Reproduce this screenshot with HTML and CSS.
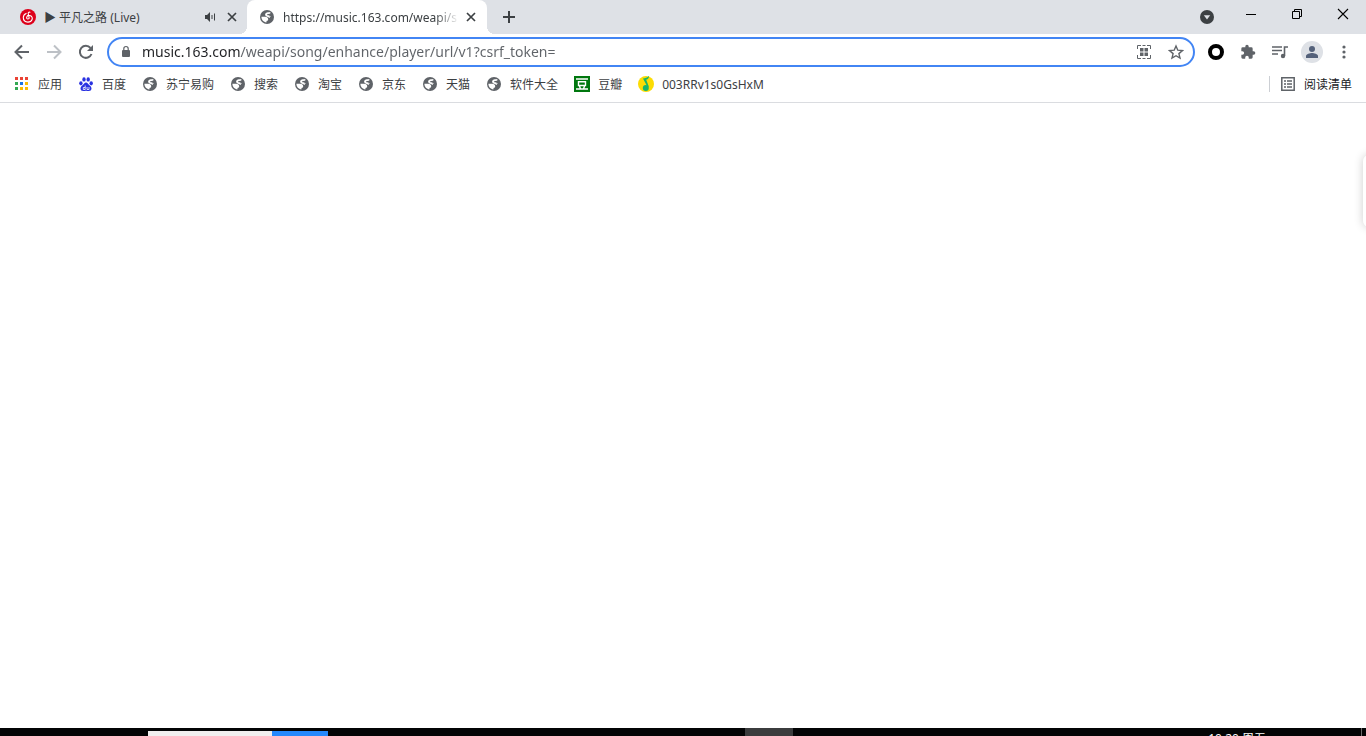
FILE: index.html
```html
<!DOCTYPE html>
<html lang="zh-CN">
<head>
  <meta charset="UTF-8">
  <meta name="viewport" content="width=device-width, initial-scale=1.0">
  <title>music.163.com</title>
  <link rel="stylesheet" href="styles.css">
</head>
<body>
  <svg class="sprite" aria-hidden="true">
    <symbol id="globe" viewBox="0 0 16 16">
      <circle cx="8" cy="8" r="7" fill="#5f6368"/>
      <path d="M11 3.300C10.500 4.300 9 4 8 4.300 6.500 4.800 6.800 6.600 8.200 6.900c1.600.3 2.300 1 3.600 1.200" fill="none" stroke="#fff" stroke-width="1.900"/>
      <path d="M2.400 7.800h3.800c1.900 0 3 1 3 2.600 0 .9-.7 1-1.300 1.400-.5.400-.5 1-.5 1.700-2.800-.3-5-2.600-5-5.700z" fill="#fff"/>
      <path d="M10.500 7.500h3c.1 2.200-1.100 4.200-2.800 5.200.3-1 1-2.600-.2-5.200z" fill="#5f6368"/>
    </symbol>
    <symbol id="close" viewBox="0 0 12 12">
      <path d="M2 2l8 8M10 2l-8 8" stroke="#3c4043" stroke-width="1.700" fill="none"/>
    </symbol>
  </svg>

  <header class="browser">
    <div class="tab-strip">
      <div class="tab">
        <svg class="icon" viewBox="0 0 16 16">
          <circle cx="8" cy="8" r="8" fill="#dd001b"/>
          <path d="M9.900 3.300C8.800 2.900 8 3.500 8.200 4.500l.9 4c.2 1.100-.5 1.500-1.200 1.500-1 0-1.400-.8-1.200-1.700.3-1.400 1.700-2.100 3.100-1.800 2 .4 2.900 2.300 2.300 4-.6 1.600-2.200 2.600-4.200 2.600-2.700 0-4.600-1.900-4.600-4.500 0-2 1.100-3.500 2.800-4.200" fill="none" stroke="#fff" stroke-width="1.100" stroke-linecap="round"/>
        </svg>
        <a class="tab-title" href="#">▶ 平凡之路 (Live)</a>
        <button class="tab-button audio" aria-label="静音">
          <svg viewBox="0 0 12 12">
            <path d="M1 4h2l3-3v10L3 8H1z" fill="#3c4043"/>
            <path d="M8 4v4M10.500 2.500v7" stroke="#3c4043" fill="none"/>
          </svg>
        </button>
        <button class="tab-button" aria-label="关闭"><svg><use href="#close"/></svg></button>
      </div>
      <div class="tab active">
        <svg class="icon"><use href="#globe"/></svg>
        <a class="tab-title fade" href="#">https://music.163.com/weapi/s</a>
        <button class="tab-button" aria-label="关闭"><svg><use href="#close"/></svg></button>
      </div>
      <button class="new-tab" aria-label="新标签页">
        <svg viewBox="0 0 12 12"><path d="M6 0v12M0 6h12" stroke="#3c4043" stroke-width="2"/></svg>
      </button>
      <div class="window-controls">
        <button class="tab-search" aria-label="搜索标签页">
          <svg viewBox="0 0 14 14"><circle cx="7" cy="7" r="7" fill="#3c4043"/><path d="M3.800 5.200h6.400L7 9.600z" fill="#dee1e6"/></svg>
        </button>
        <button aria-label="最小化"><svg viewBox="0 0 12 12"><path d="M1 6.500h10" stroke="#000"/></svg></button>
        <button aria-label="还原"><svg viewBox="0 0 12 12"><path d="M1.500 3.500h7v7h-7zM3.500 3.500v-2h7v7h-2" fill="none" stroke="#000"/></svg></button>
        <button aria-label="关闭窗口"><svg viewBox="0 0 12 12"><path d="M1 1l10 10M11 1L1 11" stroke="#000" stroke-width="1.100"/></svg></button>
      </div>
    </div>

    <div class="toolbar">
      <button class="tool" aria-label="后退">
        <svg viewBox="0 0 16 16"><path d="M15 8H2.500M8 1.500L1.500 8 8 14.500" fill="none" stroke="#5f6368" stroke-width="2"/></svg>
      </button>
      <button class="tool" aria-label="前进" disabled>
        <svg viewBox="0 0 16 16"><path d="M1 8h12.500M8 1.500L14.500 8 8 14.500" fill="none" stroke="#bdc1c6" stroke-width="2"/></svg>
      </button>
      <button class="tool" aria-label="重新加载">
        <svg viewBox="0 0 16 16"><path d="M13.500 10A6 6 0 1 1 12.500 4" fill="none" stroke="#5f6368" stroke-width="2"/><path d="M15 1v6H9z" fill="#5f6368"/></svg>
      </button>
      <form class="address">
        <svg class="icon" viewBox="0 0 16 16">
          <path d="M5 6h6a1 1 0 0 1 1 1v5a1 1 0 0 1-1 1H5a1 1 0 0 1-1-1V7a1 1 0 0 1 1-1z" fill="#5f6368"/>
          <path d="M5.800 6.500V4.700a2.200 2.200 0 0 1 4.400 0v1.800" fill="none" stroke="#5f6368" stroke-width="1.200"/>
        </svg>
        <input class="url" type="text" aria-label="地址" value="music.163.com/weapi/song/enhance/player/url/v1?csrf_token=">
        <button type="button" aria-label="二维码">
          <svg viewBox="0 0 16 16">
            <path d="M1.500 5V1.500H5M6.500 1.500h3M11 1.500h3.500V5M14.500 11v3.500H11M9.500 14.500h-3M5 14.500H1.500V11" fill="none" stroke="#5f6368"/>
            <path d="M4 4h3.500v3.500H4zM8.500 4H12v3.500H8.500zM4 8.500h3.500V12H4zM8.500 8.500H12V12H8.500z" fill="#5f6368"/>
          </svg>
        </button>
        <button type="button" aria-label="收藏">
          <svg viewBox="0 0 16 16"><path d="M8 2l1.800 4.200 4.600.4-3.500 3 1.100 4.500L8 11.700l-4 2.400 1.100-4.500-3.500-3 4.600-.4z" fill="none" stroke="#5f6368" stroke-width="1.400"/></svg>
        </button>
      </form>
      <button class="tool" aria-label="扩展"><svg viewBox="0 0 16 16"><circle cx="8" cy="8" r="6" fill="none" stroke="#000" stroke-width="4"/></svg></button>
      <button class="tool" aria-label="扩展程序">
        <svg viewBox="0 0 24 24"><path d="M20.500 11H19V7a2 2 0 0 0-2-2h-4V3.500a2.500 2.500 0 0 0-5 0V5H4a2 2 0 0 0-2 2v3.800h1.500a2.700 2.700 0 0 1 0 5.400H2V20a2 2 0 0 0 2 2h3.800v-1.500a2.700 2.700 0 0 1 5.400 0V22H17a2 2 0 0 0 2-2v-4h1.500a2.500 2.500 0 0 0 0-5z" fill="#5f6368"/></svg>
      </button>
      <button class="tool" aria-label="媒体控件">
        <svg viewBox="0 0 16 16"><path d="M0 3h10M0 6.500h10M0 10h6M12.500 12V3H16" fill="none" stroke="#5f6368" stroke-width="1.600"/><circle cx="11" cy="12" r="2.200" fill="#5f6368"/></svg>
      </button>
      <button class="tool avatar" aria-label="用户">
        <svg viewBox="0 0 22 22"><circle cx="11" cy="11" r="11" fill="#dee1e6"/><circle cx="11" cy="8" r="3" fill="#54617a"/><path d="M5 17v-2c0-2 4-3 6-3s6 1 6 3v2z" fill="#54617a"/></svg>
      </button>
      <button class="tool" aria-label="菜单">
        <svg viewBox="0 0 16 16" fill="#5f6368"><circle cx="8" cy="3" r="1.600"/><circle cx="8" cy="8" r="1.600"/><circle cx="8" cy="13" r="1.600"/></svg>
      </button>
    </div>

    <nav class="bookmarks">
      <a href="#">
        <svg class="icon" viewBox="0 0 16 16">
          <path d="M1 1h3v3H1zM6 1h3v3H6zM11 1h3v3h-3z" fill="#ea4335"/>
          <path d="M1 6h3v3H1zM1 11h3v3H1z" fill="#34a853"/>
          <path d="M6 6h3v3H6z" fill="#1a73e8"/>
          <path d="M11 6h3v3h-3zM6 11h3v3H6zM11 11h3v3h-3z" fill="#fbbc04"/>
        </svg>
        <span>应用</span>
      </a>
      <a href="#">
        <svg class="icon" viewBox="0 0 16 16">
          <g fill="#2932e1">
            <ellipse cx="2.900" cy="7.300" rx="1.700" ry="2.100"/>
            <ellipse cx="6" cy="3.400" rx="1.700" ry="2.200"/>
            <ellipse cx="10.200" cy="3.400" rx="1.700" ry="2.200"/>
            <ellipse cx="13.200" cy="7.300" rx="1.700" ry="2.100"/>
            <path d="M8 6.500c1.500 0 2.200 1.500 3.200 2.500 1.200 1 2.300 2 2.300 3.500 0 1.700-1.200 2.500-2.800 2.500-1 0-1.700-.3-2.700-.3s-1.700.3-2.700.3c-1.600 0-2.800-.8-2.800-2.500 0-1.500 1.100-2.500 2.300-3.500 1-1 1.700-2.500 3.200-2.500z"/>
          </g>
          <path d="M7.200 9.500v4H5.300v-2h1.900M9 11v2.500h2V11" fill="none" stroke="#fff" stroke-width=".8"/>
        </svg>
        <span>百度</span>
      </a>
      <a href="#"><svg class="icon"><use href="#globe"/></svg><span>苏宁易购</span></a>
      <a href="#"><svg class="icon"><use href="#globe"/></svg><span>搜索</span></a>
      <a href="#"><svg class="icon"><use href="#globe"/></svg><span>淘宝</span></a>
      <a href="#"><svg class="icon"><use href="#globe"/></svg><span>京东</span></a>
      <a href="#"><svg class="icon"><use href="#globe"/></svg><span>天猫</span></a>
      <a href="#"><svg class="icon"><use href="#globe"/></svg><span>软件大全</span></a>
      <a href="#">
        <svg class="icon" viewBox="0 0 16 16">
          <path d="M0 0h16v16H0z" fill="#00770e"/>
          <path d="M2 3h12M2 13h12M4.500 5.800h7v3.700h-7zM5.500 10l1 3M10.500 10l-1 3" fill="none" stroke="#fff" stroke-width="1.400"/>
        </svg>
        <span>豆瓣</span>
      </a>
      <a href="#">
        <svg class="icon" viewBox="0 0 16 16">
          <circle cx="8" cy="8" r="8" fill="#fcdc04"/>
          <path d="M5 2.500c2-.3 4.500-1 6-2.500.2 2-.8 3-2.800 3.800l2.600 6.700-1.300.5L5 2.500z" fill="#17b66b"/>
          <circle cx="7.800" cy="12" r="3" fill="#17b66b"/>
        </svg>
        <span>003RRv1s0GsHxM</span>
      </a>
      <a class="reading-list" href="#">
        <svg class="icon" viewBox="0 0 16 16">
          <path d="M1.800 1.800h12.400v12.400H1.800zM4 5h2M7 5h5M4 8h2M7 8h5M4 11h2M7 11h5" fill="none" stroke="#5f6368" stroke-width="1.500"/>
        </svg>
        <span>阅读清单</span>
      </a>
    </nav>
  </header>

  <main class="page">
    <div class="side-panel"></div>
  </main>

  <footer class="taskbar">
    <input class="task-search" type="text" aria-label="搜索">
    <button class="task-go" aria-label="开始搜索"></button>
    <button class="task-app" aria-label="浏览器"></button>
    <time class="clock">10:20 周五</time>
    <span class="show-desktop"></span>
  </footer>
</body>
</html>
```

FILE: styles.css
```css
* {
  box-sizing: border-box;
}

body {
  display: flex;
  flex-direction: column;
  height: 100vh;
  margin: 0;
  overflow: hidden;
  background-color: #fff;
  color: #3c4043;
  font-family: "Noto Sans", "Noto Sans CJK SC", sans-serif;
  font-size: 12px;
}

button {
  display: flex;
  align-items: center;
  justify-content: center;
  padding: 0;
  border: none;
  background: none;
}

a {
  color: inherit;
  text-decoration: none;
}

svg {
  display: block;
  flex: none;
}

.sprite {
  position: absolute;
  width: 0;
  height: 0;
}

.icon {
  width: 16px;
  height: 16px;
}

/* tabs */
.tab-strip {
  display: flex;
  height: 34px;
  background-color: #dee1e6;
}

.tab {
  display: flex;
  align-items: center;
  width: 240px;
  padding: 0 10px 0 12px;
}

.tab:first-child {
  width: 247px;
  padding-left: 20px;
  padding-right: 9px;
}

.tab.active {
  position: relative;
  border-radius: 8px 8px 0 0;
  background-color: #fff;
}

/* curved feet of the active tab */
.tab.active::before,
.tab.active::after {
  content: "";
  position: absolute;
  bottom: 0;
  width: 8px;
  height: 8px;
}

.tab.active::before {
  right: 100%;
  background: radial-gradient(circle at 0 0, transparent 8px, #fff 8px);
}

.tab.active::after {
  left: 100%;
  background: radial-gradient(circle at 100% 0, transparent 8px, #fff 8px);
}

.tab-title {
  flex: 1;
  margin: 0 8px;
  padding-top: 2px;
  overflow: hidden;
  line-height: 18px;
  white-space: nowrap;
}

.tab-title.fade {
  margin-right: 6px;
  -webkit-mask-image: linear-gradient(to left, transparent, #000 24px);
  mask-image: linear-gradient(to left, transparent, #000 24px);
}

.tab-button,
.tab-button svg {
  width: 12px;
  height: 12px;
}

.audio {
  margin-right: 10px;
}

.new-tab {
  width: 44px;
}

.new-tab svg {
  width: 12px;
  height: 12px;
}

.window-controls {
  display: flex;
  margin-left: auto;
}

.window-controls button {
  width: 46px;
  height: 28px;
}

.window-controls svg {
  width: 12px;
  height: 12px;
}

.window-controls .tab-search {
  width: 42px;
  height: 34px;
}

.window-controls .tab-search svg {
  width: 14px;
  height: 14px;
}

/* toolbar */
.toolbar {
  display: flex;
  align-items: center;
  height: 36px;
  padding: 0 6px;
}

.tool {
  width: 32px;
  height: 28px;
}

.tool svg {
  width: 16px;
  height: 16px;
}

.tool.avatar svg {
  width: 22px;
  height: 22px;
}

.address {
  display: flex;
  flex: 1;
  align-items: center;
  height: 30px;
  margin: 0 5px;
  padding: 0 9px;
  border: 2px solid #4285f4;
  border-radius: 15px;
}

.address button {
  width: 16px;
  height: 16px;
  margin-left: 16px;
}

.address button svg {
  width: 16px;
  height: 16px;
}

/* host part is darker than the path */
.url {
  flex: 1;
  min-width: 0;
  margin-left: 8px;
  padding: 0;
  border: none;
  outline: none;
  background: linear-gradient(to right, #202124 98px, #5f6368 98px);
  -webkit-background-clip: text;
  background-clip: text;
  color: transparent;
  font-family: inherit;
  font-size: 14px;
  line-height: 20px;
}

/* bookmarks */
.bookmarks {
  display: flex;
  gap: 16px;
  align-items: center;
  height: 33px;
  padding: 0 14px;
  padding-bottom: 4px;
  border-bottom: 1px solid #dadce0;
}

.bookmarks a {
  display: flex;
  gap: 8px;
  align-items: center;
  height: 16px;
  line-height: 16px;
  white-space: nowrap;
}

.bookmarks span {
  padding-top: 2px;
}

.bookmarks .reading-list {
  margin-left: auto;
  padding-left: 10px;
  border-left: 1px solid #cccfd4;
  color: #202124;
}

/* page */
.page {
  position: relative;
  flex: 1;
  overflow: hidden;
}

.side-panel {
  position: absolute;
  top: 52px;
  right: -37px;
  width: 40px;
  height: 72px;
  border-radius: 6px;
  background-color: #fff;
  box-shadow: 0 0 10px rgba(0, 0, 0, 0.2);
}

/* taskbar */
.taskbar {
  display: flex;
  height: 8px;
  padding-left: 148px;
  overflow: hidden;
  background-color: #030405;
  color: #fff;
}

.task-search {
  width: 124px;
  height: 32px;
  margin-top: 3px;
  border: none;
  background-color: #f0eeee;
}

.task-go {
  width: 56px;
  height: 32px;
  margin-top: 3px;
  background-color: #2488fc;
}

.task-app {
  width: 48px;
  height: 40px;
  margin-left: 417px;
  background-color: #3b3c3d;
}

.clock {
  margin-left: auto;
  padding-top: 2px;
  line-height: 18px;
}

.show-desktop {
  width: 5px;
  height: 40px;
  margin-left: 95px;
  border-left: 1px solid #6b6b6b;
}
```
